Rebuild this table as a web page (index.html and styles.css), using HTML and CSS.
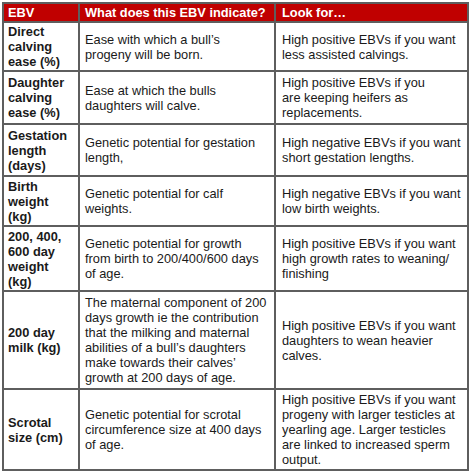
FILE: index.html
```html
<!DOCTYPE html>
<html>
<head>
<meta charset="utf-8">
<link rel="stylesheet" href="styles.css">
</head>
<body>
<table class="ebv">
  <colgroup>
    <col class="c1"><col class="c2"><col class="c3">
  </colgroup>
  <thead>
    <tr class="r-h"><th>EBV</th><th>What does this EBV indicate?</th><th>Look for…</th></tr>
  </thead>
  <tbody>
    <tr class="r1">
      <td class="name">Direct<br>calving<br>ease (%)</td>
      <td>Ease with which a bull’s<br>progeny will be born.</td>
      <td>High positive EBVs if you want<br>less assisted calvings.</td>
    </tr>
    <tr class="r2">
      <td class="name">Daughter<br>calving<br>ease (%)</td>
      <td>Ease at which the bulls<br>daughters will calve.</td>
      <td>High positive EBVs if you<br>are keeping heifers as<br>replacements.</td>
    </tr>
    <tr class="r3">
      <td class="name">Gestation<br>length<br>(days)</td>
      <td>Genetic potential for gestation<br>length,</td>
      <td>High negative EBVs if you want<br>short gestation lengths.</td>
    </tr>
    <tr class="r4">
      <td class="name">Birth<br>weight<br>(kg)</td>
      <td>Genetic potential for calf<br>weights.</td>
      <td>High negative EBVs if you want<br>low birth weights.</td>
    </tr>
    <tr class="r5">
      <td class="name">200, 400,<br>600 day<br>weight<br>(kg)</td>
      <td>Genetic potential for growth<br>from birth to 200/400/600 days<br>of age.</td>
      <td>High positive EBVs if you want<br>high growth rates to weaning/<br>finishing</td>
    </tr>
    <tr class="r6">
      <td class="name">200 day<br>milk (kg)</td>
      <td>The maternal component of 200<br>days growth ie the contribution<br>that the milking and maternal<br>abilities of a bull’s daughters<br>make towards their calves’<br>growth at 200 days of age.</td>
      <td>High positive EBVs if you want<br>daughters to wean heavier<br>calves.</td>
    </tr>
    <tr class="r7">
      <td class="name">Scrotal<br>size (cm)</td>
      <td>Genetic potential for scrotal<br>circumference size at 400 days<br>of age.</td>
      <td>High positive EBVs if you want<br>progeny with larger testicles at<br>yearling age. Larger testicles<br>are linked to increased sperm<br>output.</td>
    </tr>
  </tbody>
</table>
</body>
</html>
```

FILE: styles.css
```css
html, body {
  margin: 0;
  padding: 0;
  background: #ffffff;
}
body {
  padding: 2px 0 0 2px;
}
.ebv {
  border-collapse: collapse;
  table-layout: fixed;
  width: 467px;
  font-family: "Liberation Sans", Arial, sans-serif;
  font-size: 12.8px;
  line-height: 15px;
  color: #1a1a1a;
}
.c1 { width: 76px; }
.c2 { width: 196px; }
.c3 { width: 193px; }
.ebv th, .ebv td {
  border: 2px solid #5e5e5e;
  padding: 0 2px 0 5px;
  text-align: left;
  vertical-align: middle;
  white-space: nowrap;
  overflow: hidden;
}
.ebv td:first-child, .ebv th:first-child {
  padding-left: 4px;
}
.ebv td:nth-child(3), .ebv th:nth-child(3) {
  padding-left: 6px;
}
.ebv th {
  background: #c00000;
  color: #ffffff;
  font-weight: bold;
}
.ebv td.name {
  font-weight: bold;
}
.r-h { height: 19px; }
.r1 { height: 49px; }
.r2 { height: 53px; }
.r3 { height: 52px; }
.r4 { height: 50px; }
.r5 { height: 65px; }
.r6 { height: 98px; }
.r7 { height: 81px; }
```
